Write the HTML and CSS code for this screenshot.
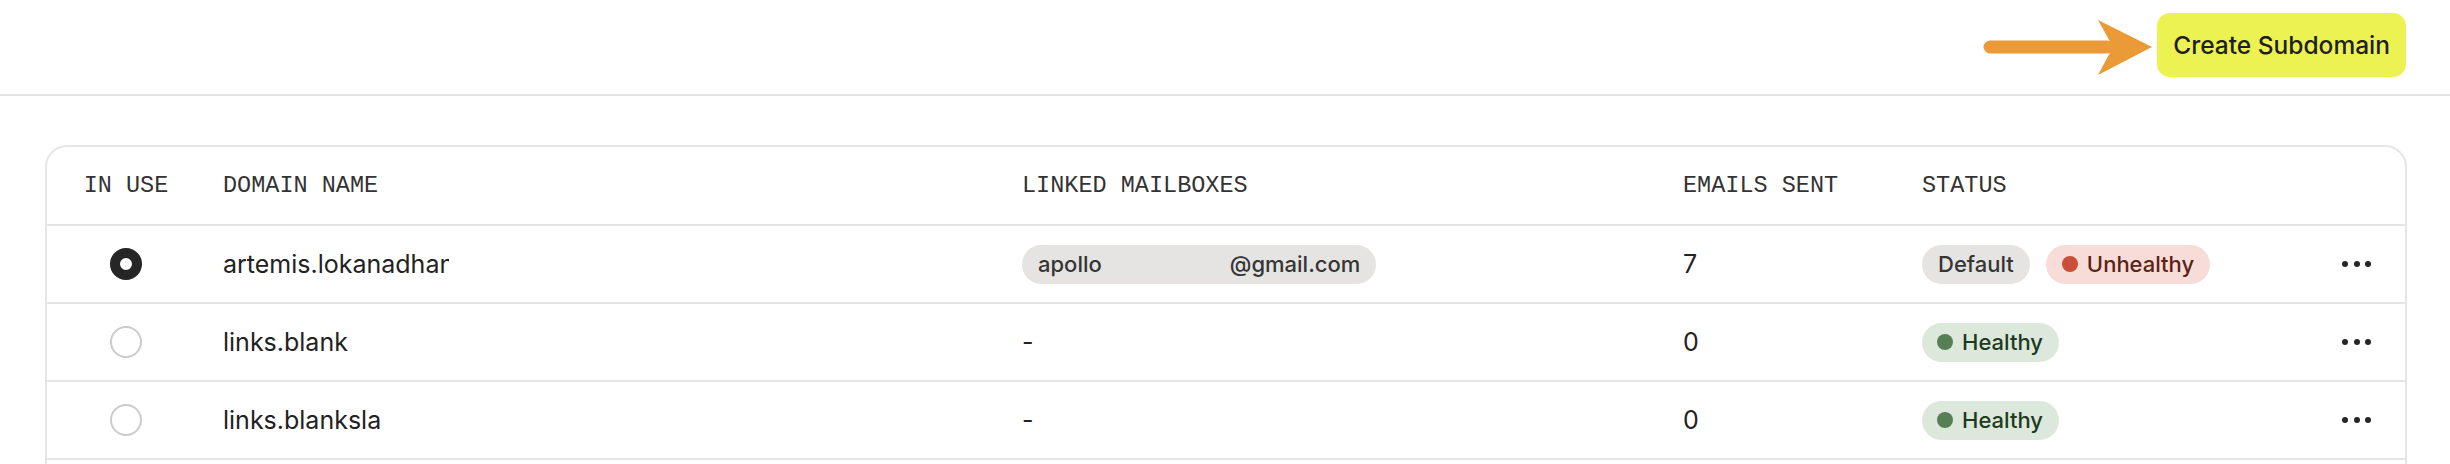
FILE: index.html
```html
<!DOCTYPE html>
<html lang="en">
<head>
    <meta charset="UTF-8">
    <meta name="viewport" content="width=device-width, initial-scale=1.0">
    <title>Subdomains</title>
    <link rel="stylesheet" href="styles.css">
</head>
<body>
    <div class="topbar">
        <svg class="arrow" width="170" height="64" viewBox="0 0 170 64">
            <line x1="7" y1="34" x2="124" y2="34" stroke="#ea9a36" stroke-width="13" stroke-linecap="round"/>
            <polygon points="115,7 169,34 115,62 130,34" fill="#ea9a36"/>
        </svg>
        <button class="create-btn">Create Subdomain</button>
    </div>

    <div class="card">
        <div class="row head">
            <div class="col-use">IN USE</div>
            <div>DOMAIN NAME</div>
            <div>LINKED MAILBOXES</div>
            <div>EMAILS SENT</div>
            <div>STATUS</div>
            <div></div>
        </div>

        <div class="row">
            <div class="col-use"><span class="radio on"></span></div>
            <div class="domain">artemis.lokanadhan.com</div>
            <div><span class="pill mailbox"><span>apollo</span><span class="mail-host">@gmail.com</span></span></div>
            <div>7</div>
            <div class="status">
                <span class="pill">Default</span>
                <span class="pill bad"><i class="dot"></i>Unhealthy</span>
            </div>
            <div class="more"><i></i><i></i><i></i></div>
        </div>

        <div class="row">
            <div class="col-use"><span class="radio"></span></div>
            <div class="domain">links.blank</div>
            <div>-</div>
            <div>0</div>
            <div class="status">
                <span class="pill good"><i class="dot"></i>Healthy</span>
            </div>
            <div class="more"><i></i><i></i><i></i></div>
        </div>

        <div class="row">
            <div class="col-use"><span class="radio"></span></div>
            <div class="domain">links.blanksla</div>
            <div>-</div>
            <div>0</div>
            <div class="status">
                <span class="pill good"><i class="dot"></i>Healthy</span>
            </div>
            <div class="more"><i></i><i></i><i></i></div>
        </div>
    </div>
</body>
</html>
```

FILE: styles.css
```css
body {
    margin: 0;
    font-family: Inter, "Noto Sans", sans-serif;
    color: #222;
    background: #fff;
}
.topbar {
    height: 81px;
    border-bottom: 2px solid #e5e5e5;
    display: flex;
    justify-content: flex-end;
    align-items: flex-start;
    padding: 13px 44px 0 0;
    gap: 4px;
}
.arrow {
    display: block;
}
.create-btn {
    height: 64px;
    padding: 0 16px;
    border: none;
    border-radius: 13px;
    background: #ecf251;
    color: #1f1f1f;
    font-family: Inter, sans-serif;
    font-size: 24.5px;
    font-weight: 500;
    cursor: pointer;
}
.card {
    margin: 49px 43px 0 45px;
    padding-bottom: 30px;
    border: 2px solid #e5e5e5;
    border-radius: 22px;
    overflow: hidden;
}
.row {
    display: grid;
    grid-template-columns: 140px 799px 661px 239px 1fr 29px;
    align-items: center;
    padding: 0 34px 0 36px;
    height: 76px;
    border-bottom: 2px solid #e5e5e5;
    font-size: 25px;
}
.row.head {
    height: 77px;
    font-family: "Liberation Mono", monospace;
    font-size: 23.5px;
    color: #333;
}
.col-use {
    width: 86px;
    display: flex;
    justify-content: center;
}
.radio {
    width: 28px;
    height: 28px;
    border-radius: 50%;
    border: 2px solid #cbcbc9;
}
.radio.on {
    width: 12px;
    height: 12px;
    border: 10px solid #262626;
    background: #fff;
}
.domain {
    max-width: 226px;
    overflow: hidden;
    white-space: nowrap;
}
.pill {
    display: inline-flex;
    align-items: center;
    height: 39px;
    padding: 0 16px;
    border-radius: 20px;
    background: #e5e4e2;
    color: #353535;
    font-size: 22px;
    font-weight: 500;
    box-sizing: border-box;
}
.mail-host {
    margin-left: 128px;
}
.status {
    display: flex;
    gap: 16px;
}
.dot {
    width: 16px;
    height: 16px;
    border-radius: 50%;
    margin-right: 9px;
}
.pill.bad {
    background: #f8dcd7;
    color: #5c2117;
}
.pill.bad .dot {
    background: #c8503b;
}
.pill.good {
    padding-left: 15px;
    background: #dde8dc;
    color: #203a1e;
}
.pill.good .dot {
    background: #577f54;
}
.more {
    display: flex;
    justify-content: space-between;
}
.more i {
    width: 6px;
    height: 6px;
    border-radius: 50%;
    background: #262626;
}
```
